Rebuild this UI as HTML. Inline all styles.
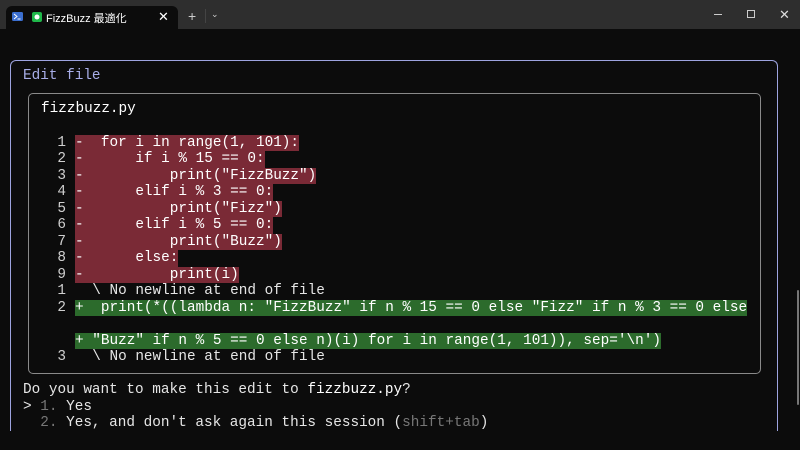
<!DOCTYPE html>
<html><head><meta charset="utf-8"><style>
*{margin:0;padding:0;box-sizing:border-box}
html,body{width:800px;height:450px;overflow:hidden}
body{background:#0c0c0c;position:relative;font-family:"Liberation Mono",monospace;font-size:14.37px;color:#e6e6e6}
.bar{position:absolute;left:0;top:0;width:800px;height:29px;background:#2e2e2e}
.tab{position:absolute;left:6px;top:6px;width:172px;height:23px;background:#0c0c0c;border-radius:6px 6px 0 0}
.t{position:absolute;font-family:"Liberation Sans","Noto Sans CJK JP",sans-serif;font-size:11px;color:#fff}
.outer{position:absolute;left:10px;top:60px;width:768px;height:371px;border:1.5px solid #9ea4e0;border-bottom:none;border-radius:6px 6px 0 0}
.inner{position:absolute;left:28px;top:93px;width:733px;height:281px;border:1.5px solid #8a8a8a;border-radius:5px}
.l{position:absolute;white-space:pre;line-height:16.46px;height:16.46px}
.n{position:absolute;width:38px;text-align:right;left:28px;color:#cfcfcf}
.r{background:#7a2a36;color:#fff}
.g{background:#2c6b2c;color:#fff}
</style></head><body>
<div class="bar"></div>
<div class="tab"></div>
<svg style="position:absolute;left:12px;top:12px" width="11" height="9"><rect width="11" height="9" rx="1.5" fill="#3b6fd0"/><path d="M2 2l3 2.5-3 2.5M5.5 7h3" stroke="#fff" stroke-width="1" fill="none"/></svg>
<svg style="position:absolute;left:32px;top:12px" width="10" height="10"><rect width="10" height="10" rx="2" fill="#1fb84a"/><circle cx="5" cy="5" r="2.5" fill="#fff"/></svg>
<div class="t" style="left:46px;top:10px">FizzBuzz 最適化</div>
<div class="t" style="left:158px;top:9px;font-size:13px">✕</div>
<div class="t" style="left:188px;top:8px;font-size:14px;color:#ccc">+</div>
<div style="position:absolute;left:205px;top:9px;width:1px;height:14px;background:#444"></div>
<div class="t" style="left:211px;top:9px;font-size:9px;color:#ccc">⌄</div>
<div style="position:absolute;left:714px;top:14px;width:8px;height:1px;background:#ccc"></div>
<div style="position:absolute;left:747px;top:10px;width:8px;height:8px;border:1px solid #ccc"></div>
<div class="t" style="left:779px;top:7px;font-size:13px;color:#ddd">✕</div>
<div class="outer"></div>
<div style="position:absolute;right:1px;top:290px;width:2px;height:115px;background:#777;border-radius:1px"></div>
<div class="inner"></div>
<div class="l" style="left:23px;top:68px;color:#a8aee8">Edit file</div>
<div class="l" style="left:41px;top:101px;color:#fff">fizzbuzz.py</div>
<div style="position:absolute;left:0;top:135px">
<div class="l n" style="top:0">1</div><div class="l r" style="left:75px;top:0">-  for i in range(1, 101):</div>
<div class="l n" style="top:16.46px">2</div><div class="l r" style="left:75px;top:16.46px">-      if i % 15 == 0:</div>
<div class="l n" style="top:32.92px">3</div><div class="l r" style="left:75px;top:32.92px">-          print("FizzBuzz")</div>
<div class="l n" style="top:49.38px">4</div><div class="l r" style="left:75px;top:49.38px">-      elif i % 3 == 0:</div>
<div class="l n" style="top:65.84px">5</div><div class="l r" style="left:75px;top:65.84px">-          print("Fizz")</div>
<div class="l n" style="top:82.3px">6</div><div class="l r" style="left:75px;top:82.3px">-      elif i % 5 == 0:</div>
<div class="l n" style="top:98.76px">7</div><div class="l r" style="left:75px;top:98.76px">-          print("Buzz")</div>
<div class="l n" style="top:115.22px">8</div><div class="l r" style="left:75px;top:115.22px">-      else:</div>
<div class="l n" style="top:131.68px">9</div><div class="l r" style="left:75px;top:131.68px">-          print(i)</div>
<div class="l n" style="top:148.14px">1</div><div class="l" style="left:75px;top:148.14px">  \ No newline at end of file</div>
<div class="l n" style="top:164.6px">2</div><div class="l g" style="left:75px;top:164.6px">+  print(*((lambda n: "FizzBuzz" if n % 15 == 0 else "Fizz" if n % 3 == 0 else</div>
<div class="l g" style="left:75px;top:197.52px">+ "Buzz" if n % 5 == 0 else n)(i) for i in range(1, 101)), sep='\n')</div>
<div class="l n" style="top:213.98px">3</div><div class="l" style="left:75px;top:213.98px">  \ No newline at end of file</div>
</div>
<div class="l" style="left:23px;top:382px">Do you want to make this edit to <span style="color:#fff">fizzbuzz.py</span>?</div>
<div class="l" style="left:23px;top:398.5px">&gt; <span style="color:#777">1.</span> Yes</div>
<div class="l" style="left:23px;top:415px">  <span style="color:#777">2.</span> Yes, and don't ask again this session (<span style="color:#777">shift+tab</span>)</div>
</body></html>
